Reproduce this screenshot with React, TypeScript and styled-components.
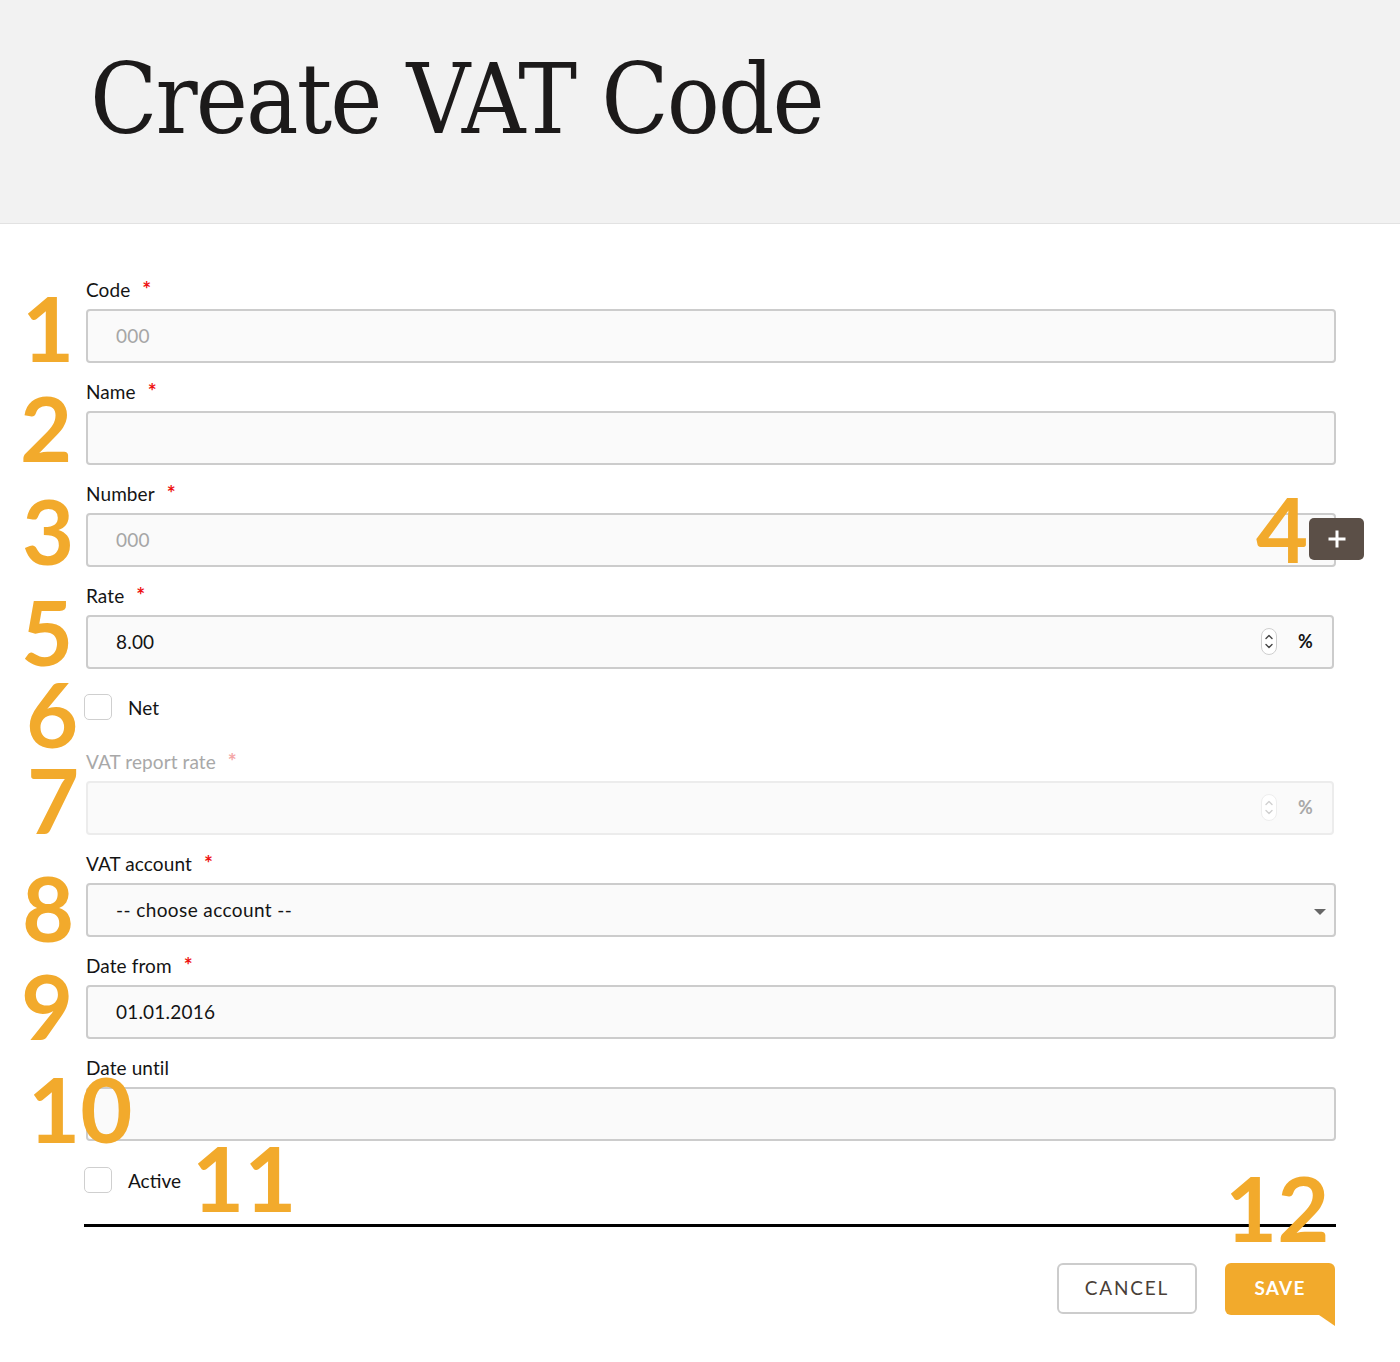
import React from "react";
import styled, { createGlobalStyle } from "styled-components";

const Global = createGlobalStyle`
  html, body { margin: 0; padding: 0; background: #ffffff; }
  body { font-family: "Lato", "Noto Sans", sans-serif; color: #222; }
  * { box-sizing: border-box; }
`;

const Page = styled.div`
  position: relative;
  width: 1400px;
  min-height: 1362px;
  background: #fff;
`;

const Header = styled.header`
  height: 224px;
  background: #f2f2f2;
  border-bottom: 1px solid #e2e2e2;
  padding: 39px 0 0 90px;
`;

const Title = styled.h1`
  margin: 0;
  font-family: "DejaVu Serif Condensed", "DejaVu Serif", serif;
  font-stretch: condensed;
  font-weight: 400;
  font-size: 98px;
  line-height: 120px;
  letter-spacing: -1.9px;
  color: #1c1a1a;
`;

const Form = styled.form`
  margin: 0 64px 0 86px;
  padding-top: 54px;
  display: flex;
  flex-direction: column;
`;

const Field = styled.div`
  display: flex;
  flex-direction: column;
  gap: 8px;
  margin-bottom: 17px;
`;

const Label = styled.label<{ $disabled?: boolean }>`
  font-size: 19px;
  line-height: 23px;
  letter-spacing: 0.1px;
  color: ${(p) => (p.$disabled ? "#a8a8a8" : "#141414")};
  display: flex;
  gap: 12px;
`;

const Req = styled.span<{ $disabled?: boolean }>`
  font-size: 21px;
  font-weight: 700;
  line-height: 22px;
  color: ${(p) => (p.$disabled ? "#f4a6a6" : "#ee1111")};
`;

const Input = styled.input<{ $disabled?: boolean }>`
  width: 100%;
  height: 54px;
  border: 2px solid ${(p) => (p.$disabled ? "#ececec" : "#cccccc")};
  border-radius: 4px;
  background: #fafafa;
  padding: 0 28px 2px;
  font-family: "Lato", "Noto Sans", sans-serif;
  font-size: 19px;
  letter-spacing: 0.2px;
  color: #141414;
  outline: none;
  &::placeholder { color: #a6a6a6; }
`;

const Row = styled.div`
  position: relative;
`;

const PlusButton = styled.button`
  position: absolute;
  right: -28px;
  top: 5px;
  width: 55px;
  height: 42px;
  border: none;
  border-radius: 5px;
  background: #5b4f47;
  color: #fff;
  display: flex;
  align-items: center;
  justify-content: center;
  padding: 0;
`;

const Group = styled.div<{ $disabled?: boolean }>`
  display: flex;
  align-items: center;
  height: 54px;
  width: 1248px;
  border: 2px solid ${(p) => (p.$disabled ? "#ececec" : "#cccccc")};
  border-radius: 4px;
  background: #fafafa;
  padding-left: 28px;
  padding-bottom: 2px;
  font-size: 19px;
  letter-spacing: 0.2px;
`;

const GroupValue = styled.span`
  flex: 1;
  color: #141414;
`;

const Spinner = styled.span<{ $disabled?: boolean }>`
  width: 16px;
  height: 27px;
  border: 1px solid ${(p) => (p.$disabled ? "#eeeeee" : "#cfcfcf")};
  border-radius: 8px;
  background: #fff;
  display: flex;
  align-items: center;
  justify-content: center;
`;

const Addon = styled.span<{ $disabled?: boolean }>`
  width: 55px;
  text-align: center;
  font-weight: 700;
  font-size: 18px;
  color: ${(p) => (p.$disabled ? "#a8a8a8" : "#141414")};
  padding-left: 2px;
`;

const CheckRow = styled.label<{ $mt: number; $mb: number }>`
  display: flex;
  align-items: center;
  gap: 16px;
  margin: ${(p) => p.$mt}px 0 ${(p) => p.$mb}px -2px;
  font-size: 19px;
  color: #141414;
  height: 26px;
`;

const Box = styled.span`
  width: 28px;
  height: 26px;
  border: 1px solid #cfcfcf;
  border-radius: 5px;
  background: #fff;
`;

const Select = styled.div`
  position: relative;
  height: 54px;
  border: 2px solid #cccccc;
  border-radius: 4px;
  background: #fafafa;
  padding: 0 28px 2px;
  display: flex;
  align-items: center;
  font-size: 19px;
  letter-spacing: 0.4px;
  color: #141414;
`;

const Caret = styled.span`
  position: absolute;
  right: 8px;
  top: 24px;
  width: 0;
  height: 0;
  border-left: 6px solid transparent;
  border-right: 6px solid transparent;
  border-top: 6px solid #666;
`;

const Divider = styled.hr`
  margin: 0 0 0 -2px;
  border: none;
  height: 3px;
  background: #000;
`;

const Actions = styled.div`
  display: flex;
  justify-content: flex-end;
  gap: 28px;
  margin-top: 36px;
`;

const CancelButton = styled.button`
  width: 140px;
  height: 51px;
  border: 2px solid #cccccc;
  border-radius: 6px;
  background: #fff;
  font-family: "Lato", "Noto Sans", sans-serif;
  font-size: 19px;
  letter-spacing: 1.8px;
  color: #4a3f38;
  padding: 0 0 2px 0;
`;

const SaveButton = styled.button`
  position: relative;
  width: 110px;
  height: 52px;
  border: none;
  border-radius: 6px 6px 0 6px;
  background: #f2aa2c;
  color: #fff;
  font-family: "Lato", "Noto Sans", sans-serif;
  font-weight: 700;
  font-size: 19px;
  letter-spacing: 1.2px;
  padding: 0 0 4px 0;
  margin-right: 1px;
  &::after {
    content: "";
    position: absolute;
    right: 0;
    bottom: -11px;
    width: 0;
    height: 0;
    border-top: 11px solid #f2aa2c;
    border-left: 16px solid transparent;
  }
`;

const Badge = styled.span<{ $x: number; $y: number }>`
  position: absolute;
  left: ${(p) => p.$x}px;
  top: ${(p) => p.$y}px;
  font-family: "Lato", "Noto Sans", sans-serif;
  font-weight: 700;
  font-size: 90px;
  line-height: 90px;
  color: #f2aa2c;
  pointer-events: none;
`;

const Chevrons = ({ color }: { color: string }) => (
  <svg width="10" height="19" viewBox="0 0 10 19" fill="none" stroke={color} strokeWidth="1.4" strokeLinecap="round" strokeLinejoin="round">
    <path d="M2 6.5 L5 3.5 L8 6.5" />
    <path d="M2 12.5 L5 15.5 L8 12.5" />
  </svg>
);

const Plus = () => (
  <svg width="18" height="18" viewBox="0 0 18 18" fill="none" stroke="#fff" strokeWidth="3" strokeLinecap="square">
    <path d="M9 2 V16 M2 9 H16" />
  </svg>
);

const badges: Array<[string, number, number]> = [
  ["1", 22, 282],
  ["2", 20, 382],
  ["3", 22, 485],
  ["4", 1256, 483],
  ["5", 21, 586],
  ["6", 26, 668],
  ["7", 27, 754],
  ["8", 22, 862],
  ["9", 21, 960],
  ["10", 28, 1063],
  ["11", 192, 1132],
  ["12", 1225, 1162],
];

export default function App() {
  return (
    <Page>
      <Global />
      <Header>
        <Title>Create VAT Code</Title>
      </Header>
      <Form onSubmit={(e) => e.preventDefault()}>
        <Field>
          <Label>Code<Req>*</Req></Label>
          <Input placeholder="000" />
        </Field>
        <Field>
          <Label>Name<Req>*</Req></Label>
          <Input />
        </Field>
        <Field>
          <Label>Number<Req>*</Req></Label>
          <Row>
            <Input placeholder="000" />
            <PlusButton type="button"><Plus /></PlusButton>
          </Row>
        </Field>
        <Field>
          <Label>Rate<Req>*</Req></Label>
          <Group>
            <GroupValue>8.00</GroupValue>
            <Spinner><Chevrons color="#444" /></Spinner>
            <Addon>%</Addon>
          </Group>
        </Field>
        <CheckRow $mt={8} $mb={30}>
          <Box />
          Net
        </CheckRow>
        <Field>
          <Label $disabled>VAT report rate<Req $disabled>*</Req></Label>
          <Group $disabled>
            <GroupValue />
            <Spinner $disabled><Chevrons color="#d0d0d0" /></Spinner>
            <Addon $disabled>%</Addon>
          </Group>
        </Field>
        <Field>
          <Label>VAT account<Req>*</Req></Label>
          <Select>
            -- choose account --
            <Caret />
          </Select>
        </Field>
        <Field>
          <Label>Date from<Req>*</Req></Label>
          <Input defaultValue="01.01.2016" />
        </Field>
        <Field>
          <Label>Date until</Label>
          <Input />
        </Field>
        <CheckRow $mt={9} $mb={31}>
          <Box />
          Active
        </CheckRow>
        <Divider />
        <Actions>
          <CancelButton type="button">CANCEL</CancelButton>
          <SaveButton type="submit">SAVE</SaveButton>
        </Actions>
      </Form>
      {badges.map(([t, x, y]) => (
        <Badge key={t} $x={x} $y={y}>{t}</Badge>
      ))}
    </Page>
  );
}
